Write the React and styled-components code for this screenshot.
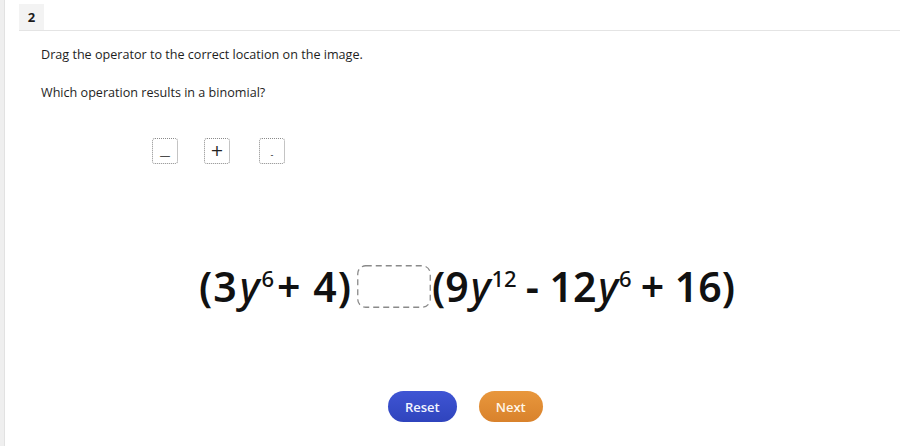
import styled, { createGlobalStyle } from 'styled-components';

const GlobalStyle = createGlobalStyle`
  html, body {
    margin: 0;
    padding: 0;
    background: #fff;
  }
  body {
    font-family: 'Open Sans', 'Noto Sans', sans-serif;
    color: #222;
  }
`;

const dashedBox = encodeURIComponent(
  `<svg xmlns='http://www.w3.org/2000/svg' width='74' height='43'><rect x='0.75' y='0.75' width='72.5' height='41.5' rx='8' fill='none' stroke='#8a8a8a' stroke-width='1.3' stroke-dasharray='6 4'/></svg>`
);

const Page = styled.div`
  display: flex;
  width: 900px;
  height: 446px;
  overflow: hidden;
`;

const SideStrip = styled.div`
  width: 4px;
  flex-shrink: 0;
  background-color: #efefef;
  border-right: 1px solid #e2e2e2;
`;

const Main = styled.div`
  flex: 1;
  display: flex;
  flex-direction: column;
  padding-left: 14px;
`;

const Header = styled.div`
  display: flex;
  padding-top: 4px;
  border-bottom: 1px solid #e4e4e4;
`;

const Badge = styled.div`
  width: 25px;
  height: 26px;
  display: flex;
  align-items: center;
  justify-content: center;
  background-color: #f3f3f3;
  font-weight: 700;
  font-size: 13px;
  color: #1c1c1c;
`;

const Body = styled.div`
  display: flex;
  flex-direction: column;
  padding: 15px 0 0 22px;
`;

const Prompt = styled.p`
  margin: 0 0 ${props => props.$gap}px;
  font-size: 12.6px;
  line-height: 17px;
  color: #1e1e1e;
`;

const TileRow = styled.div`
  display: flex;
  margin: 37px 0 0 111px;
`;

const Tile = styled.div`
  width: 26px;
  height: 26px;
  margin-left: ${props => props.$offset || 0}px;
  display: flex;
  align-items: center;
  justify-content: center;
  border: 1px dotted #8a8a8a;
  border-radius: 3px;
  font-family: 'DejaVu Sans', sans-serif;
  font-size: ${props => props.$size}px;
  color: #222;
  line-height: 1;
  padding-top: ${props => props.$drop}px;
  box-sizing: border-box;
`;

const Equation = styled.div`
  display: flex;
  align-items: center;
  margin: 98px 0 0 158px;
  font-family: 'Noto Sans', 'Open Sans', sans-serif;
  font-weight: 600;
  font-size: 41px;
  color: #111;
  white-space: nowrap;
`;

const Term = styled.span`
  line-height: 48px;
  letter-spacing: ${props => props.$track || 0}px;
`;

const Var = styled.i`
  font-style: italic;
  font-weight: 500;
  margin: 0 1px 0 2px;
`;

const Sup = styled.sup`
  font-size: 22px;
  vertical-align: 15px;
  line-height: 0;
  font-weight: 500;
  letter-spacing: 0;
  margin-right: ${props => props.$space || 0}px;
`;

const DropZone = styled.div`
  width: 74px;
  height: 43px;
  flex-shrink: 0;
  margin: 0 1px 0 5px;
  background-image: url("data:image/svg+xml,${dashedBox}");
  background-repeat: no-repeat;
`;

const Actions = styled.div`
  display: flex;
  gap: 22px;
  margin: 81px 0 0 347px;
`;

const Button = styled.button`
  height: 31px;
  padding: 0 ${props => props.$pad}px;
  border: none;
  border-radius: 16px;
  font-family: 'Open Sans', sans-serif;
  font-weight: 600;
  font-size: 13px;
  color: ${props => props.$text};
  background: ${props => props.$bg};
  cursor: pointer;
`;

export default function App() {
  return (
    <>
      <GlobalStyle />
      <Page>
        <SideStrip />
        <Main>
          <Header>
            <Badge>2</Badge>
          </Header>
          <Body>
            <Prompt $gap={21}>Drag the operator to the correct location on the image.</Prompt>
            <Prompt $gap={0}>Which operation results in a binomial?</Prompt>
            <TileRow>
              <Tile $size={11} $drop={9}>—</Tile>
              <Tile $size={16} $drop={0} $offset={26}>+</Tile>
              <Tile $size={8} $drop={9} $offset={29}>-</Tile>
            </TileRow>
            <Equation>
              <Term $track={1}>
                (3<Var>y</Var><Sup $space={3}>6</Sup>+ 4)
              </Term>
              <DropZone />
              <Term>
                (9<Var>y</Var><Sup $space={9}>12</Sup>- 12<Var>y</Var><Sup $space={9}>6</Sup>+ 16)
              </Term>
            </Equation>
            <Actions>
              <Button $pad={17} $bg="linear-gradient(#3f55d4, #2f44bd)" $text="#f2f4ff">
                Reset
              </Button>
              <Button $pad={17} $bg="linear-gradient(#e8973c, #d9822c)" $text="#fff6e8">
                Next
              </Button>
            </Actions>
          </Body>
        </Main>
      </Page>
    </>
  );
}
